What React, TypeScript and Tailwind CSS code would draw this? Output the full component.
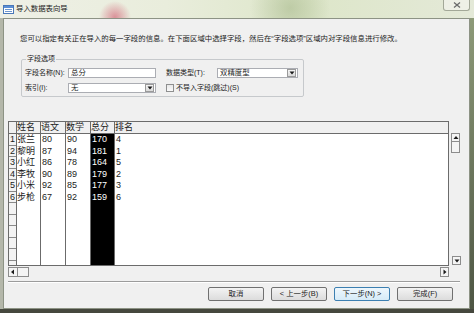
import React from 'react';

type Dir = 'up' | 'down' | 'left' | 'right';

function Tri({ dir }: { dir: Dir }) {
  const pts =
    dir === 'up' ? '0.5,4 3,1 5.5,4' : dir === 'down' ? '0.5,1.5 5.5,1.5 3,4.5' : dir === 'left' ? '4,0.5 4,5.5 1,3' : '1.5,0.5 1.5,5.5 4.5,3';
  return (
    <svg width="6" height="6" viewBox="0 0 6 6">
      <polygon points={pts} fill="#1a1a1a" />
    </svg>
  );
}

function DropArrow() {
  return (
    <div className="w-[9px] h-[8px] mr-[1px] border border-[#9a9a9a] bg-gradient-to-b from-[#f6f6f6] to-[#dadada] flex items-center justify-center">
      <Tri dir="down" />
    </div>
  );
}

const rows = [
  ['张兰', '80', '90', '170', '4'],
  ['黎明', '87', '94', '181', '1'],
  ['小红', '86', '78', '164', '5'],
  ['李牧', '90', '89', '179', '2'],
  ['小米', '92', '85', '177', '3'],
  ['步枪', '67', '92', '159', '6'],
];

const cols = [
  { w: 'w-[24px]', title: '姓名', i: 0, dark: false },
  { w: 'w-[25px]', title: '语文', i: 1, dark: false },
  { w: 'w-[25px]', title: '数学', i: 2, dark: false },
  { w: 'w-[24px]', title: '总分', i: 3, dark: true },
];

const empty = Array.from({ length: 12 }, (_, i) => i);

export default function App() {
  return (
    <div className="w-[474px] h-[313px] overflow-hidden flex flex-col font-['Liberation_Sans','Noto_Sans_CJK_SC',sans-serif] text-[#1c1c1c] bg-[#dfe4d2]">
      {/* title bar */}
      <div className="h-[18px] shrink-0 flex items-start bg-[radial-gradient(circle_at_115px_17px,rgba(205,70,95,0.55),transparent_16px),radial-gradient(circle_at_290px_8px,rgba(150,170,120,0.45),transparent_40px),linear-gradient(90deg,#eef0e6_0%,#e9eddc_35%,#dde6c9_65%,#e4e9d8_100%)]">
        <svg className="ml-[3px] mt-[5px]" width="11" height="9" viewBox="0 0 11 9">
          <rect x="0.5" y="0.5" width="10" height="8" fill="#ffffff" stroke="#4a78b8" />
          <rect x="1" y="1" width="9" height="2" fill="#5b8fd6" />
          <line x1="2" y1="4.5" x2="9" y2="4.5" stroke="#6b96cf" />
          <line x1="2" y1="6.5" x2="9" y2="6.5" stroke="#6b96cf" />
        </svg>
        <span className="ml-[2px] mt-[4px] text-[7.4px] leading-[10px] text-[#222]">导入数据表向导</span>
        <div className="ml-auto mr-[4px] w-[27px] h-[11px] border border-t-0 border-[#a3a898] rounded-b-[3px] bg-[#eef0e6] flex items-center justify-center">
          <svg width="8" height="6" viewBox="0 0 8 6">
            <path d="M1 0.5 L7 5.5 M7 0.5 L1 5.5" stroke="#6b6b6b" strokeWidth="1.3" />
          </svg>
        </div>
      </div>

      <div className="flex flex-1">
        <div className="w-[3px] bg-[#b4b7aa]" />
        {/* client area */}
        <div className="w-[467px] border border-[#8d9385] bg-[#f0f0f0] flex flex-col">
          <p className="mt-[15px] ml-[16px] h-[10px] text-[7.4px] leading-[10px] whitespace-nowrap">
            您可以指定有关正在导入的每一字段的信息。在下面区域中选择字段，然后在“字段选项”区域内对字段信息进行修改。
          </p>

          <fieldset className="mt-[11px] ml-[17px] w-[283px] border border-[#c6c9cc] rounded-[2px] pl-[3px] pb-[3px]">
            <legend className="ml-[1px] px-[1px] text-[7px] leading-[8px]">字段选项</legend>
            <div className="mt-[5px] h-[10px] flex items-center text-[7px]">
              <span className="w-[43px] leading-[10px] whitespace-nowrap">字段名称(N):</span>
              <div className="w-[88px] h-[10px] border border-[#abadb3] bg-white pl-[2px] text-[7.4px] leading-[8px]">总分</div>
              <span className="ml-[10px] w-[51px] leading-[10px] whitespace-nowrap">数据类型(T):</span>
              <div className="w-[81px] h-[10px] border border-[#abadb3] bg-white pl-[2px] flex items-center justify-between">
                <span className="text-[7.4px] leading-[8px]">双精度型</span>
                <DropArrow />
              </div>
            </div>
            <div className="mt-[5px] h-[10px] flex items-center text-[7px]">
              <span className="w-[43px] leading-[10px] whitespace-nowrap">索引(I):</span>
              <div className="w-[88px] h-[10px] border border-[#abadb3] bg-white pl-[2px] flex items-center justify-between">
                <span className="text-[7.4px] leading-[8px]">无</span>
                <DropArrow />
              </div>
              <div className="ml-[10px] w-[8px] h-[8px] border border-[#8e8f8f] bg-gradient-to-b from-[#e8e8e8] to-[#fafafa]" />
              <span className="ml-[2px] leading-[10px] whitespace-nowrap">不导入字段(跳过)(S)</span>
            </div>
          </fieldset>

          {/* grid area */}
          <div className="mt-[24px] ml-[4px] flex">
            <div className="flex flex-col">
              <div className="w-[441px] h-[145px] border border-[#6b6b6b] bg-white flex overflow-hidden text-[9px]">
                <div className="w-[8px] shrink-0 border-r border-[#6b6b6b] flex flex-col bg-[#f3f3f3]">
                  <div className="h-[12px] shrink-0 border-b border-[#6b6b6b] bg-[#f0f0f0]" />
                  {empty.map((i) => (
                    <div key={i} className="h-[11.5px] shrink-0 border-b border-[#8a8a8a] leading-[11px] text-center">
                      {i < 6 ? i + 1 : ''}
                    </div>
                  ))}
                </div>
                {cols.map((c) => (
                  <div
                    key={c.title}
                    className={`${c.w} shrink-0 border-r border-[#6b6b6b] flex flex-col ${c.dark ? 'bg-black text-white' : 'bg-white'}`}
                  >
                    <div className="h-[12px] shrink-0 border-b border-[#6b6b6b] bg-[#f0f0f0] text-[#1c1c1c] leading-[11px] whitespace-nowrap">
                      {c.title}
                    </div>
                    {rows.map((r, k) => (
                      <div key={k} className={`h-[11.5px] shrink-0 leading-[11.5px] whitespace-nowrap ${c.i === 0 ? '' : 'pl-[1px]'}`}>
                        {r[c.i]}
                      </div>
                    ))}
                  </div>
                ))}
                <div className="flex-1 flex flex-col">
                  <div className="h-[12px] shrink-0 border-b border-[#6b6b6b] bg-[#f0f0f0] leading-[11px] whitespace-nowrap">排名</div>
                  {rows.map((r, k) => (
                    <div key={k} className="h-[11.5px] shrink-0 leading-[11.5px] pl-[1px]">
                      {r[4]}
                    </div>
                  ))}
                </div>
              </div>
              {/* horizontal scrollbar */}
              <div className="w-[441px] h-[12px] flex items-start pt-[1px]">
                <div className="w-[10px] h-[10px] border border-[#8c8c8c] bg-[#f4f4f4] flex items-center justify-center">
                  <Tri dir="left" />
                </div>
                <div className="w-[11px] h-[10px] border border-l-0 border-[#8c8c8c] bg-[#f4f4f4]" />
                <div className="ml-auto w-[9px] h-[10px] border border-[#8c8c8c] bg-[#f4f4f4] flex items-center justify-center">
                  <Tri dir="right" />
                </div>
              </div>
            </div>
            {/* vertical scrollbar */}
            <div className="w-[12px] h-[145px] flex flex-col">
              <div className="mt-[12px] ml-[2px] w-[9px] h-[9px] border border-[#8c8c8c] bg-[#f4f4f4] flex items-center justify-center">
                <Tri dir="up" />
              </div>
              <div className="ml-[2px] w-[9px] h-[11px] border border-t-0 border-[#8c8c8c] bg-[#f4f4f4]" />
              <div className="mt-auto mb-[1px] ml-[3px] w-[9px] h-[9px] border border-[#8c8c8c] bg-[#f4f4f4] flex items-center justify-center">
                <Tri dir="down" />
              </div>
            </div>
          </div>

          <div className="mt-[3px] ml-[4px] w-[452px] h-[2px] border-t border-b border-t-[#9c9c9c] border-b-white" />

          <div className="mt-[4px] pr-[16px] flex justify-end gap-[7px] text-[7.4px]">
            <button className="w-[56px] h-[14px] rounded-[2px] border border-[#707070] bg-gradient-to-b from-[#f3f3f3] to-[#dcdcdc] leading-[12px]">取消</button>
            <button className="w-[56px] h-[14px] rounded-[2px] border border-[#707070] bg-gradient-to-b from-[#f3f3f3] to-[#dcdcdc] leading-[12px]">&lt; 上一步(B)</button>
            <button className="w-[56px] h-[14px] rounded-[2px] border border-[#3c7fb1] bg-gradient-to-b from-[#eef7fd] to-[#d6ebf8] leading-[12px]">下一步(N) &gt;</button>
            <button className="w-[56px] h-[14px] rounded-[2px] border border-[#707070] bg-gradient-to-b from-[#f3f3f3] to-[#dcdcdc] leading-[12px]">完成(F)</button>
          </div>
        </div>
        <div className="flex-1 bg-gradient-to-b from-[#8d9a78] to-[#4e5644]" />
      </div>
      <div className="h-[4px] shrink-0 bg-[#46483e]" />
    </div>
  );
}
